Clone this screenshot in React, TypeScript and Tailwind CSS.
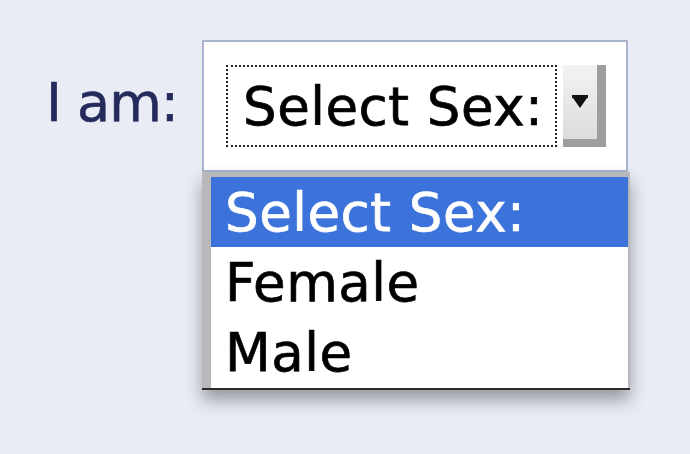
const options = ["Select Sex:", "Female", "Male"];

export default function App() {
  return (
    <div
      className="w-[690px] h-[454px] bg-[#e9ecf5] overflow-hidden"
      style={{ fontFamily: '"DejaVu Sans", Verdana, sans-serif' }}
    >
      <div className="flex items-center pt-[40px] pl-[46px]">
        <label className="text-[54px] leading-none text-[#252a5c] w-[156px] pb-[6px] tracking-[-1px] [-webkit-text-stroke:0.6px_#252a5c]">
          I am:
        </label>

        <div className="relative">
          <div className="w-[426px] h-[132px] border-2 border-[#a9b5cd] bg-white flex items-center pl-[22px] gap-[6px]">
            <div className="w-[331px] h-[82px] border-2 border-dotted border-[#222] flex items-center pl-[15px]">
              <span className="text-[53px] leading-none text-black tracking-[0.5px] [-webkit-text-stroke:0.7px_#000]">
                Select Sex:
              </span>
            </div>
            <div className="relative w-[43px] h-[82px] bg-gradient-to-b from-[#f3f3f3] to-[#dcdcdc] border-r-[9px] border-b-[8px] border-[#9e9e9e] flex items-center justify-center">
              <svg width="16" height="14" viewBox="0 0 16 14">
                <rect x="0" y="0" width="16" height="3" fill="#111" />
                <path d="M1 3 L15 3 L8 13 Z" fill="#111" />
              </svg>
            </div>
          </div>

          {/* open menu */}
          <div className="absolute left-0 top-[132px] w-[428px] bg-[#b8b8bb] pl-[9px] pt-[5px] pr-[2px] border-b-2 border-[#2b2b2b] shadow-[0_10px_16px_rgba(0,0,0,0.35)]">
            <div className="bg-white">
              {options.map((opt, i) => (
                <div
                  key={opt}
                  className={
                    i === 0
                      ? "h-[70px] flex items-center pl-[14px] bg-[#3b73da] text-white text-[53px] leading-none tracking-[0.5px] [-webkit-text-stroke:0.7px_#fff]"
                      : "h-[70px] flex items-center pl-[14px] text-black text-[53px] leading-none tracking-[0.5px] [-webkit-text-stroke:0.7px_#000]"
                  }
                >
                  {opt}
                </div>
              ))}
              <div className="h-[1px]" />
            </div>
          </div>
        </div>
      </div>
    </div>
  );
}
